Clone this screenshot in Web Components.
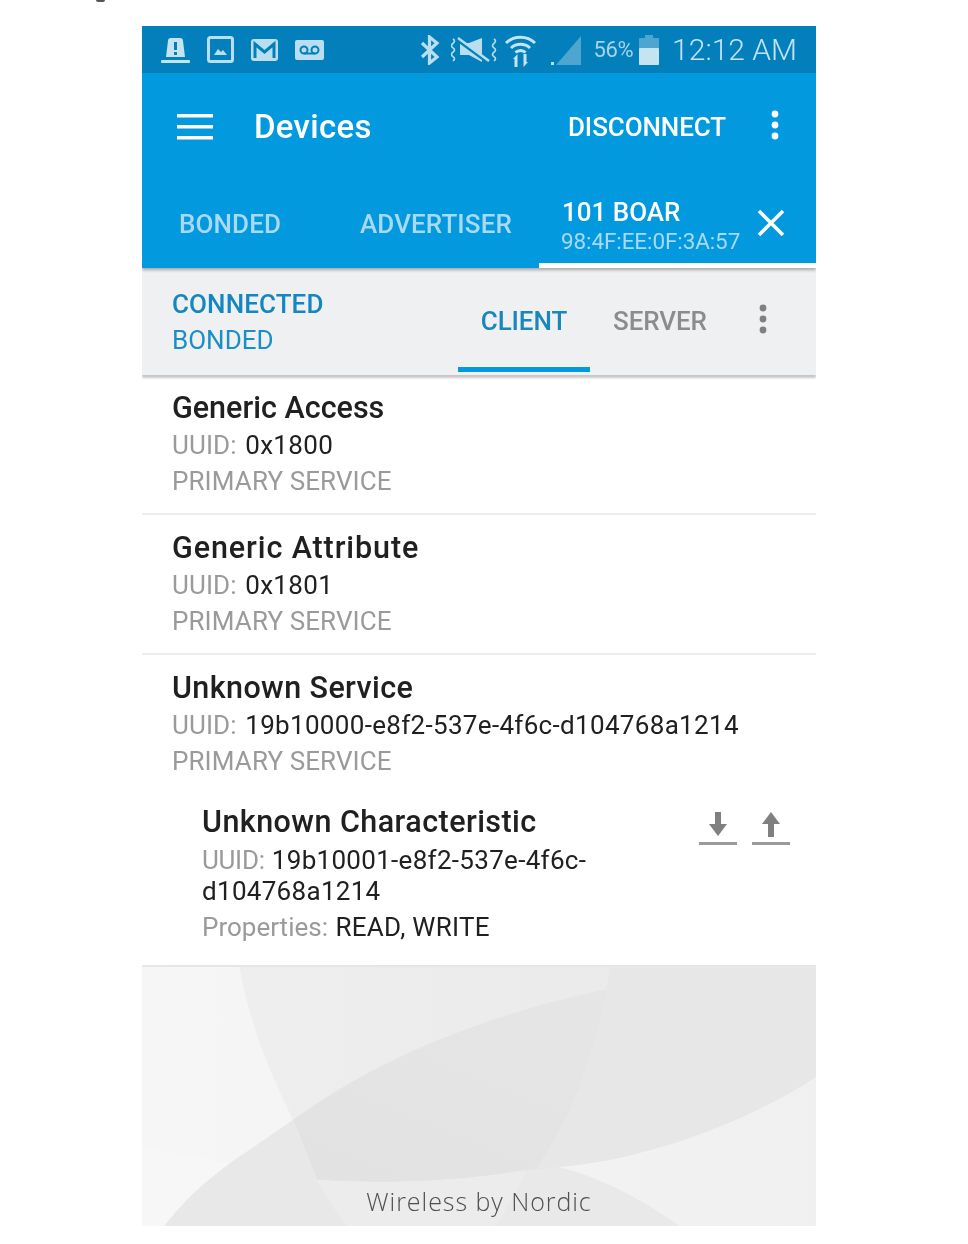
<!DOCTYPE html>
<html>
<head>
<meta charset="utf-8">
<title>Devices</title>
<style>
    html, body { margin: 0; padding: 0; background: #fff; }
    body { font-family: Roboto, "Liberation Sans", sans-serif; }
</style>
</head>
<body>
<device-page>
    <status-bar></status-bar>
    <app-bar title="Devices" action="DISCONNECT"></app-bar>
    <conn-bar></conn-bar>
    <service-item name="Generic Access" uuid="0x1800" track="0"></service-item>
    <service-item name="Generic Attribute" uuid="0x1801" track="0.9"></service-item>
    <service-item name="Unknown Service" uuid="19b10000-e8f2-537e-4f6c-d104768a1214" track="0.4" last></service-item>
    <char-item name="Unknown Characteristic" uuid="19b10001-e8f2-537e-4f6c-" uuid-end="d104768a1214" props="READ, WRITE"></char-item>
    <nordic-footer></nordic-footer>
</device-page>

<script>
const DOTS = (color) => `
    <svg width="10" height="32" viewBox="0 0 10 32">
        <circle cx="5" cy="5" r="3.4" fill="${color}"/>
        <circle cx="5" cy="16" r="3.4" fill="${color}"/>
        <circle cx="5" cy="27" r="3.4" fill="${color}"/>
    </svg>`;

class DevicePage extends HTMLElement {
    constructor() {
        super();
        this.attachShadow({ mode: 'open' }).innerHTML = `
            <style>
                :host { display: block; position: relative; width: 968px; height: 1244px; padding: 26px 0 18px 142px; box-sizing: border-box; }
                .phone { width: 674px; height: 1200px; display: flex; flex-direction: column; background: #fff; overflow: hidden; filter: blur(.6px); }
                .crumb { position: absolute; left: 96px; top: 0; width: 9px; height: 2px; background: #555; border-radius: 0 0 4px 4px; }
            </style>
            <i class="crumb"></i>
            <div class="phone"><slot></slot></div>`;
    }
}

class StatusBar extends HTMLElement {
    constructor() {
        super();
        this.attachShadow({ mode: 'open' }).innerHTML = `
            <style>
                :host { display: flex; align-items: center; height: 47px; background: #0380bc; color: #b9deef; font-family: Roboto, sans-serif; flex: none; }
                svg { display: block; flex: none; }
                .left { display: flex; align-items: center; gap: 17px; margin-left: 19px; }
                .right { display: flex; align-items: center; margin-left: auto; margin-right: 19px; }
                .pct { font-size: 22px; letter-spacing: -.4px; margin-left: 11px; color: #a5d3ea; }
                .time { font-size: 30px; margin-left: 13px; font-weight: 300; color: #c4e3f2; white-space: nowrap; }
            </style>
            <div class="left">
                <svg width="29" height="28" viewBox="0 0 29 28">
                    <path d="M5 21 7 5a3 3 0 0 1 3-3h9a3 3 0 0 1 3 3l2 16z" fill="#c5e4f2"/>
                    <rect x="13" y="6" width="3" height="8" fill="#0380bc"/><rect x="13" y="16" width="3" height="3" fill="#0380bc"/>
                    <rect y="24" x="0" width="29" height="3" rx="1" fill="#c5e4f2"/>
                </svg>
                <svg width="27" height="27" viewBox="0 0 27 27">
                    <rect x="1.500" y="1.500" width="24" height="24" rx="2" fill="none" stroke="#b9deef" stroke-width="3"/>
                    <path d="M7 19l4-6 3 3 2-2 4 5z" fill="#b9deef"/>
                </svg>
                <svg width="27" height="22" viewBox="0 0 27 22">
                    <rect width="27" height="22" rx="3" fill="#b9deef"/>
                    <path d="M4 19V5l9.500 8L23 5v14" fill="none" stroke="#0380bc" stroke-width="3"/>
                </svg>
                <svg width="29" height="20" viewBox="0 0 29 20">
                    <rect width="29" height="20" rx="2" fill="#b9deef"/>
                    <circle cx="9" cy="10" r="3.500" fill="none" stroke="#0380bc" stroke-width="2"/>
                    <circle cx="20" cy="10" r="3.500" fill="none" stroke="#0380bc" stroke-width="2"/>
                    <rect x="9" y="12.500" width="11" height="2" fill="#0380bc"/>
                </svg>
            </div>
            <div class="right">
                <svg width="22" height="30" viewBox="0 0 22 30">
                    <path d="M3 8l15 14-7.500 6V2L18 8 3 22" fill="none" stroke="#b9deef" stroke-width="3.200"/>
                </svg>
                <svg width="46" height="26" viewBox="0 0 46 26" style="margin-left:10px">
                    <path d="M2 2q3 2 0 4.400t0 4.400 0 4.400 0 4.400 0 4.400M43 2q3 2 0 4.400t0 4.400 0 4.400 0 4.400 0 4.400" fill="none" stroke="#b9deef" stroke-width="1.600"/>
                    <path d="M9 6h9l13-5v24L18 18H9z" fill="#b9deef"/>
                    <path d="M7 3l30 22" stroke="#0380bc" stroke-width="4"/><path d="M7 1l31 23" stroke="#b9deef" stroke-width="2.500"/>
                </svg>
                <svg width="33" height="34" viewBox="0 0 33 34" style="margin-left:7px">
                    <path d="M2 10a21 21 0 0 1 29 0M7 15a14 14 0 0 1 19 0M11.500 19.500a7 7 0 0 1 10 0" fill="none" stroke="#c5e4f2" stroke-width="3"/>
                    <path d="M9 26l4.500-5V34h-3v-8zM24 29l-4.500 5V21h3v8z" fill="#c5e4f2"/>
                </svg>
                <svg width="31" height="30" viewBox="0 0 31 30" style="margin-left:14px">
                    <path d="M5 30 30 1v29z" fill="#4ea6d0"/><rect x="0" y="27" width="3" height="3" fill="#b9deef"/>
                </svg>
                <span class="pct">56%</span>
                <svg width="20" height="30" viewBox="0 0 20 30" style="margin-left:6px">
                    <rect x="6" width="8" height="3" fill="#4ea6d0"/>
                    <rect y="3" width="20" height="27" rx="1" fill="#4ea6d0"/>
                    <rect y="13" width="20" height="17" rx="1" fill="#c5e4f2"/>
                </svg>
                <span class="time">12:12 AM</span>
            </div>`;
    }
}

class AppBar extends HTMLElement {
    constructor() {
        super();
        this.attachShadow({ mode: 'open' }).innerHTML = `
            <style>
                :host { display: block; background: #0299df; color: #fff; height: 195px; flex: none; position: relative; z-index: 2; box-shadow: 0 2px 3px rgba(0,0,0,.3); font-family: Roboto, sans-serif; }
                .top { display: flex; align-items: center; height: 107px; }
                .burger { margin-left: 35px; display: block; }
                h1 { margin: 0 0 0 41px; font-size: 33px; font-weight: 500; letter-spacing: .3px; }
                .action { margin-left: auto; font-size: 26px; font-weight: 500; letter-spacing: -.1px; }
                .more { margin: 0 36px 0 44px; display: block; }
                .tabs { display: grid; grid-template-columns: 397px 277px; height: 88px; }
                .plain { display: flex; align-items: center; gap: 79px; padding-left: 37px; font-size: 26px; font-weight: 500; color: #a9d9f3; letter-spacing: .1px; height: 88px; }
                .active { position: relative; border-bottom: 5px solid #fff; height: 83px; display: flex; align-items: flex-start; }
                .names { padding: 17px 0 0 23px; width: 195px; }
                .n1 { font-size: 26px; font-weight: 500; line-height: 30px; }
                .n2 { font-size: 22.500px; color: #a9d9f3; line-height: 28px; letter-spacing: -.1px; margin-left: -1px; white-space: nowrap; }
                .close { margin: 29px 0 0 0; display: block; }
            </style>
            <div class="top">
                <svg class="burger" width="36" height="26" viewBox="0 0 36 26">
                    <rect y="0" width="36" height="3.500" fill="#fff"/><rect y="11" width="36" height="3.500" fill="#fff"/><rect y="22" width="36" height="3.500" fill="#fff"/>
                </svg>
                <h1>${this.getAttribute('title')}</h1>
                <span class="action">${this.getAttribute('action')}</span>
                <span class="more">${DOTS('#fff')}</span>
            </div>
            <div class="tabs">
                <div class="plain"><span>BONDED</span><span>ADVERTISER</span></div>
                <div class="active">
                    <div class="names"><div class="n1">101 BOAR</div><div class="n2">98:4F:EE:0F:3A:57</div></div>
                    <svg class="close" width="28" height="28" viewBox="0 0 28 28"><path d="M2 2l24 24M26 2 2 26" stroke="#fff" stroke-width="3.500"/></svg>
                </div>
            </div>`;
    }
}

class ConnBar extends HTMLElement {
    constructor() {
        super();
        this.attachShadow({ mode: 'open' }).innerHTML = `
            <style>
                :host { display: flex; height: 107px; background: #eff0f2; flex: none; box-shadow: 0 3px 2px rgba(0,0,0,.22); position: relative; z-index: 1; font-family: Roboto, sans-serif; }
                .state { padding: 18px 0 0 30px; width: 286px; flex: none; }
                .state div { line-height: 36px; font-size: 26px; color: #1a8fc7; letter-spacing: 0; }
                .state .on { font-weight: 500; letter-spacing: .1px; color: #1487c0; }
                .tab { font-size: 26px; font-weight: 500; letter-spacing: -.1px; display: flex; align-items: center; justify-content: center; height: 104px; box-sizing: border-box; flex: none; }
                .client { width: 132px; color: #1a86bd; border-bottom: 5px solid #0299df; padding-top: 6px; }
                .server { width: 140px; color: #8b8c8d; padding-top: 2px; }
                .more { display: block; margin: 35px 0 0 28px; }
            </style>
            <div class="state"><div class="on">CONNECTED</div><div>BONDED</div></div>
            <div class="tab client">CLIENT</div>
            <div class="tab server">SERVER</div>
            <span class="more">${DOTS('#7f8080')}</span>`;
    }
}

class ServiceItem extends HTMLElement {
    constructor() {
        super();
        this.attachShadow({ mode: 'open' }).innerHTML = `
            <style>
                :host { display: block; flex: none; height: 140px; box-sizing: border-box; padding: 13px 0 0 30px; border-bottom: 2px solid #ececec; font-family: Roboto, sans-serif; }
                :host([last]) { border-bottom: 0; height: 136px; }
                .name { font-size: 30.500px; font-weight: 500; color: #202020; line-height: 39px; letter-spacing: ${this.getAttribute('track')}px; }
                .line { font-size: 26px; line-height: 36px; color: #9a9a9a; letter-spacing: .1px; white-space: nowrap; }
                .val { color: #202020; margin-left: 2px; letter-spacing: .32px; }
            </style>
            <div class="name">${this.getAttribute('name')}</div>
            <div class="line">UUID: <span class="val">${this.getAttribute('uuid')}</span></div>
            <div class="line">PRIMARY SERVICE</div>`;
    }
}

class CharItem extends HTMLElement {
    constructor() {
        super();
        this.attachShadow({ mode: 'open' }).innerHTML = `
            <style>
                :host { display: flex; flex: none; height: 174px; box-sizing: border-box; padding: 0 26px 0 60px; font-family: Roboto, sans-serif; }
                .text { width: 420px; padding-top: 11px; flex: none; }
                .name { font-size: 30.500px; font-weight: 500; color: #202020; line-height: 40px; letter-spacing: .45px; white-space: nowrap; margin-bottom: 3px; }
                .line { font-size: 26px; line-height: 31px; color: #9a9a9a; letter-spacing: -.3px; white-space: nowrap; }
                .props { margin-top: 5px; letter-spacing: 0; }
                .val { color: #202020; letter-spacing: .3px; margin-left: 1px; }
                .ops { margin-left: auto; display: flex; gap: 15px; padding-top: 20px; }
                svg { display: block; }
            </style>
            <div class="text">
                <div class="name">${this.getAttribute('name')}</div>
                <div class="line">UUID: <span class="val">${this.getAttribute('uuid')}</span></div>
                <div class="line"><span class="val" style="margin-left:0">${this.getAttribute('uuid-end')}</span></div>
                <div class="line props">Properties: <span class="val">${this.getAttribute('props')}</span></div>
            </div>
            <div class="ops">
                <svg width="38" height="36" viewBox="0 0 38 36">
                    <path d="M16 1h6v12h6L19 25 10 13h6z" fill="#808080"/><rect y="31" width="38" height="3" fill="#9a9a9a"/>
                </svg>
                <svg width="38" height="36" viewBox="0 0 38 36">
                    <path d="M16 26h6V13h6L19 1 10 13h6z" fill="#808080"/><rect y="31" width="38" height="3" fill="#9a9a9a"/>
                </svg>
            </div>`;
    }
}

class NordicFooter extends HTMLElement {
    constructor() {
        super();
        this.attachShadow({ mode: 'open' }).innerHTML = `
            <style>
                :host { display: block; flex: 1; position: relative; background: #f1f1f1; overflow: hidden; font-family: "Open Sans", Lato, sans-serif; }
                svg { display: block; position: absolute; inset: 0; }
                .label { position: absolute; left: 0; right: 0; bottom: 8px; text-align: center; font-size: 25px; font-weight: 300; letter-spacing: .95px; color: #4f4f4f; }
            </style>
            <svg width="674" height="261" viewBox="0 0 674 261">
                <defs>
                    <linearGradient id="left" x1="0" x2="1" y1="0" y2="0"><stop offset="0" stop-color="#f6f6f6"/><stop offset="1" stop-color="#f0f0f0"/></linearGradient>
                    <linearGradient id="mid" x1="0" x2="1" y1="0" y2="0"><stop offset="0" stop-color="#eeeeee"/><stop offset="1" stop-color="#e9e9e9"/></linearGradient>
                    <linearGradient id="leaf" x1="0" x2="1" y1="1" y2="0"><stop offset="0" stop-color="#e2e2e2"/><stop offset="1" stop-color="#e7e7e7"/></linearGradient>
                </defs>
                <rect width="674" height="261" fill="url(#left)"/>
                <path d="M97 0H674V112C600 160 500 195 416 202 340 215 260 220 175 215 165 190 160 175 151 155 130 110 110 70 97 0z" fill="url(#mid)"/>
                <path d="M151 155C220 105 295 72 372 48 460 20 560 5 674 2V112C600 160 500 195 416 202 340 215 260 220 175 215z" fill="url(#leaf)"/>
                <path d="M468 2C455 90 430 150 394 204L416 202C500 195 600 160 674 112V2z" fill="#e7e7e7"/>
                <path d="M22 261C45 232 65 215 88 198L151 155 175 215C185 232 195 248 206 261z" fill="#e8e8e8"/>
                <path d="M175 215C260 220 320 215 385 205L354 261H206C195 248 185 232 175 215z" fill="#ececec"/>
                <path d="M385 205 416 202C460 212 500 235 538 261H354z" fill="#e9e9e9"/>
                <path d="M0 182 88 198C65 215 45 232 22 261H0z" fill="#f7f7f7"/>
                <rect width="674" height="2" fill="#e6e6e6"/>
            </svg>
            <div class="label">Wireless by Nordic</div>`;
    }
}

customElements.define('device-page', DevicePage);
customElements.define('status-bar', StatusBar);
customElements.define('app-bar', AppBar);
customElements.define('conn-bar', ConnBar);
customElements.define('service-item', ServiceItem);
customElements.define('char-item', CharItem);
customElements.define('nordic-footer', NordicFooter);
</script>
</body>
</html>
